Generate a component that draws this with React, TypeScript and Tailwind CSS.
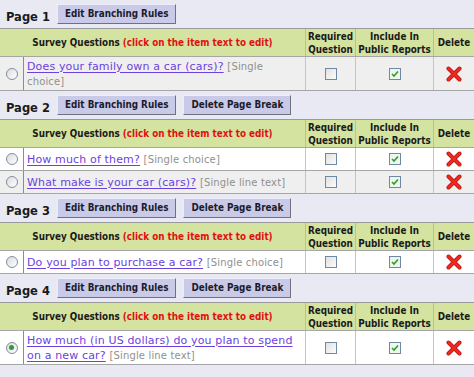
import React from "react";

const font = { fontFamily: '"DejaVu Sans", Verdana, sans-serif' };
const cond = { fontFamily: '"DejaVu Sans Condensed", "DejaVu Sans", Tahoma, sans-serif' };

function Btn({ children }: { children: React.ReactNode }) {
  return (
    <div
      className="h-[20px] px-[7px] flex items-center bg-[#c9cae8] border border-t-[#eeeefa] border-l-[#eeeefa] border-r-[#6f7080] border-b-[#6f7080] text-[9.8px] font-bold text-[#1c1c2c] whitespace-nowrap"
      style={cond}
    >
      {children}
    </div>
  );
}

function Radio({ on }: { on?: boolean }) {
  return (
    <div className="w-[12px] h-[12px] rounded-full border border-[#7d8ea6] bg-gradient-to-br from-[#dcdcdc] to-[#ffffff] flex items-center justify-center">
      {on && <div className="w-[5px] h-[5px] rounded-full bg-[#2e9c3a]" />}
    </div>
  );
}

function Check({ on }: { on?: boolean }) {
  return (
    <div
      className={
        "w-[12px] h-[12px] border border-[#6f88a6] flex items-center justify-center " +
        (on ? "bg-[#eef6ee]" : "bg-gradient-to-br from-[#e2e2e2] to-[#fbfbfb]")
      }
    >
      {on && (
        <svg width="8" height="8" viewBox="0 0 8 8">
          <path d="M1 4 L3 6 L7 1.5" stroke="#2f9e2f" strokeWidth="1.6" fill="none" />
        </svg>
      )}
    </div>
  );
}

function RedX() {
  return (
    <svg width="16" height="16" viewBox="0 0 16 16">
      <path d="M2.5 2.5 L13.5 13.5 M13.5 2.5 L2.5 13.5" stroke="#b81010" strokeWidth="4" strokeLinecap="round" />
      <path d="M2.5 2.5 L13.5 13.5 M13.5 2.5 L2.5 13.5" stroke="#ec2a20" strokeWidth="2.6" strokeLinecap="round" />
    </svg>
  );
}

const cols = "grid grid-cols-[24px_282px_50px_78px_40px]";

function HeaderRow() {
  return (
    <div className={cols + " h-[28px] bg-[#d5e3a1] border-b border-[#a6a6a6] text-[9.8px] font-bold text-[#1a1a1a] leading-[13px] whitespace-nowrap"} style={cond}>
      <div className="col-span-2 flex items-center justify-center border-r border-[#b7c48c]">
        <span>Survey Questions&nbsp;</span>
        <span className="text-[#e01010]">(click on the item text to edit)</span>
      </div>
      <div className="flex items-center justify-center text-center border-r border-[#b7c48c]">
        Required<br />Question
      </div>
      <div className="flex items-center justify-center text-center border-r border-[#b7c48c]">
        Include In<br />Public Reports
      </div>
      <div className="flex items-center justify-center">Delete</div>
    </div>
  );
}

function Row({
  q,
  type,
  gray,
  tall,
  sel,
}: {
  q: React.ReactNode;
  type: React.ReactNode;
  gray?: boolean;
  tall?: boolean;
  sel?: boolean;
}) {
  return (
    <div
      className={
        cols +
        " border-b border-[#a6a6a6] " +
        (tall ? "h-[34px] " : "h-[23px] ") +
        (gray ? "bg-[#efefef]" : "bg-white")
      }
    >
      <div className="flex items-center justify-center border-r border-[#8c8c8c]">
        <Radio on={sel} />
      </div>
      <div className="flex items-center px-[3px] border-r border-[#c4c4c4]">
        <div className="text-[11px] leading-[15px] tracking-[0.15px] whitespace-nowrap" style={font}>
          {q}
          {type}
        </div>
      </div>
      <div className="flex items-center justify-center border-r border-[#c4c4c4]">
        <Check />
      </div>
      <div className="flex items-center justify-center border-r border-[#c4c4c4]">
        <Check on />
      </div>
      <div className="flex items-center justify-center">
        <RedX />
      </div>
    </div>
  );
}

const L = ({ children }: { children: React.ReactNode }) => (
  <span className="text-[#6b3fe0] underline underline-offset-2">{children}</span>
);
const T = ({ children }: { children: React.ReactNode }) => (
  <span className="text-[#909090] text-[10px]">{children}</span>
);

function PageHead({ n, del }: { n: number; del?: boolean }) {
  return (
    <div className="h-[29px] flex items-center pl-[6px] border-b border-[#9a9a9a]">
      <span className="text-[11.5px] font-bold text-[#1a1a1a] w-[51px] pt-[8px]" style={font}>
        Page {n}
      </span>
      <div className="flex gap-[7px]">
        <Btn>Edit Branching Rules</Btn>
        {del && <Btn>Delete Page Break</Btn>}
      </div>
    </div>
  );
}

export default function App() {
  return (
    <div className="w-[474px] h-[377px] overflow-hidden bg-[#e8e9f3]">
      <PageHead n={1} />
      <HeaderRow />
      <Row
        tall
        gray
        q={<><L>Does your family own a car (cars)?</L> </>}
        type={<T>[Single<br />choice]</T>}
      />
      <PageHead n={2} del />
      <HeaderRow />
      <Row q={<><L>How much of them?</L> </>} type={<T>[Single choice]</T>} />
      <Row gray q={<><L>What make is your car (cars)?</L> </>} type={<T>[Single line text]</T>} />
      <PageHead n={3} del />
      <HeaderRow />
      <Row q={<><L>Do you plan to purchase a car?</L> </>} type={<T>[Single choice]</T>} />
      <PageHead n={4} del />
      <HeaderRow />
      <Row
        tall
        sel
        q={<><L>How much (in US dollars) do you plan to spend</L><br /><L>on a new car?</L> </>}
        type={<T>[Single line text]</T>}
      />
    </div>
  );
}
